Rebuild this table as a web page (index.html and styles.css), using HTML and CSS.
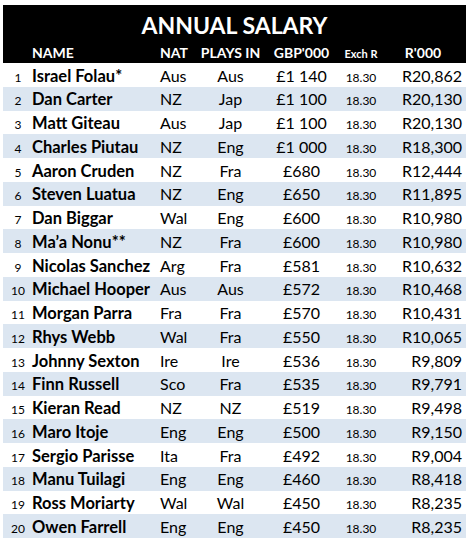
FILE: index.html
```html
<!DOCTYPE html>
<html>
<head>
<meta charset="utf-8">
<link rel="stylesheet" href="styles.css">
</head>
<body>
<div class="sheet">
  <div class="head">
    <div class="title">ANNUAL SALARY</div>
    <div class="row cols">
      <div></div>
      <div class="h-name">NAME</div>
      <div class="h-nat">NAT</div>
      <div class="c">PLAYS IN</div>
      <div class="c">GBP'000</div>
      <div class="c small">Exch R</div>
      <div class="c">R'000</div>
    </div>
  </div>
  <div class="body">
    <div class="row"><div class="n">1</div><div class="name">Israel Folau*</div><div class="nat">Aus</div><div class="c">Aus</div><div class="c">£1 140</div><div class="c ex">18.30</div><div class="r">R20,862</div></div>
    <div class="row"><div class="n">2</div><div class="name">Dan Carter</div><div class="nat">NZ</div><div class="c">Jap</div><div class="c">£1 100</div><div class="c ex">18.30</div><div class="r">R20,130</div></div>
    <div class="row"><div class="n">3</div><div class="name">Matt Giteau</div><div class="nat">Aus</div><div class="c">Jap</div><div class="c">£1 100</div><div class="c ex">18.30</div><div class="r">R20,130</div></div>
    <div class="row"><div class="n">4</div><div class="name">Charles Piutau</div><div class="nat">NZ</div><div class="c">Eng</div><div class="c">£1 000</div><div class="c ex">18.30</div><div class="r">R18,300</div></div>
    <div class="row"><div class="n">5</div><div class="name">Aaron Cruden</div><div class="nat">NZ</div><div class="c">Fra</div><div class="c">£680</div><div class="c ex">18.30</div><div class="r">R12,444</div></div>
    <div class="row"><div class="n">6</div><div class="name">Steven Luatua</div><div class="nat">NZ</div><div class="c">Eng</div><div class="c">£650</div><div class="c ex">18.30</div><div class="r">R11,895</div></div>
    <div class="row"><div class="n">7</div><div class="name">Dan Biggar</div><div class="nat">Wal</div><div class="c">Eng</div><div class="c">£600</div><div class="c ex">18.30</div><div class="r">R10,980</div></div>
    <div class="row"><div class="n">8</div><div class="name">Ma’a Nonu**</div><div class="nat">NZ</div><div class="c">Fra</div><div class="c">£600</div><div class="c ex">18.30</div><div class="r">R10,980</div></div>
    <div class="row"><div class="n">9</div><div class="name">Nicolas Sanchez</div><div class="nat">Arg</div><div class="c">Fra</div><div class="c">£581</div><div class="c ex">18.30</div><div class="r">R10,632</div></div>
    <div class="row"><div class="n">10</div><div class="name">Michael Hooper</div><div class="nat">Aus</div><div class="c">Aus</div><div class="c">£572</div><div class="c ex">18.30</div><div class="r">R10,468</div></div>
    <div class="row"><div class="n">11</div><div class="name">Morgan Parra</div><div class="nat">Fra</div><div class="c">Fra</div><div class="c">£570</div><div class="c ex">18.30</div><div class="r">R10,431</div></div>
    <div class="row"><div class="n">12</div><div class="name">Rhys Webb</div><div class="nat">Wal</div><div class="c">Fra</div><div class="c">£550</div><div class="c ex">18.30</div><div class="r">R10,065</div></div>
    <div class="row"><div class="n">13</div><div class="name">Johnny Sexton</div><div class="nat">Ire</div><div class="c">Ire</div><div class="c">£536</div><div class="c ex">18.30</div><div class="r">R9,809</div></div>
    <div class="row"><div class="n">14</div><div class="name">Finn Russell</div><div class="nat">Sco</div><div class="c">Fra</div><div class="c">£535</div><div class="c ex">18.30</div><div class="r">R9,791</div></div>
    <div class="row"><div class="n">15</div><div class="name">Kieran Read</div><div class="nat">NZ</div><div class="c">NZ</div><div class="c">£519</div><div class="c ex">18.30</div><div class="r">R9,498</div></div>
    <div class="row"><div class="n">16</div><div class="name">Maro Itoje</div><div class="nat">Eng</div><div class="c">Eng</div><div class="c">£500</div><div class="c ex">18.30</div><div class="r">R9,150</div></div>
    <div class="row"><div class="n">17</div><div class="name">Sergio Parisse</div><div class="nat">Ita</div><div class="c">Fra</div><div class="c">£492</div><div class="c ex">18.30</div><div class="r">R9,004</div></div>
    <div class="row"><div class="n">18</div><div class="name">Manu Tuilagi</div><div class="nat">Eng</div><div class="c">Eng</div><div class="c">£460</div><div class="c ex">18.30</div><div class="r">R8,418</div></div>
    <div class="row"><div class="n">19</div><div class="name">Ross Moriarty</div><div class="nat">Wal</div><div class="c">Wal</div><div class="c">£450</div><div class="c ex">18.30</div><div class="r">R8,235</div></div>
    <div class="row"><div class="n">20</div><div class="name">Owen Farrell</div><div class="nat">Eng</div><div class="c">Eng</div><div class="c">£450</div><div class="c ex">18.30</div><div class="r">R8,235</div></div>
  </div>
</div>
</body>
</html>
```

FILE: styles.css
```css
html, body {
  margin: 0;
  padding: 0;
  background: #fff;
}
.sheet {
  width: 463px;
  padding: 5px 0 0 3px;
  font-family: Lato, "Open Sans", sans-serif;
  color: #000;
}
.head {
  background: #000;
  color: #fff;
  font-weight: bold;
}
.title {
  height: 38px;
  display: flex;
  align-items: center;
  justify-content: center;
  font-size: 23px;
  padding-top: 1px;
  box-sizing: border-box;
}
.row {
  display: grid;
  grid-template-columns: 29px 128px 40px 61px 81px 38px 86px;
  align-items: baseline;
  height: 23.75px;
  box-sizing: border-box;
  padding-top: 2.5px;
  line-height: 20px;
  font-size: 16px;
  white-space: nowrap;
}
.cols {
  height: 20px;
  padding-top: 0;
  font-size: 14px;
}
.c {
  text-align: center;
}
.small {
  font-size: 11px;
}
.body .row:nth-child(even) {
  background: #dce6f1;
}
.n {
  text-align: center;
  font-size: 12px;
  padding-left: 1px;
}
.name {
  font-weight: bold;
  font-size: 16.5px;
}
.ex {
  font-size: 12px;
}
.r {
  text-align: right;
  padding-right: 4px;
}
```
